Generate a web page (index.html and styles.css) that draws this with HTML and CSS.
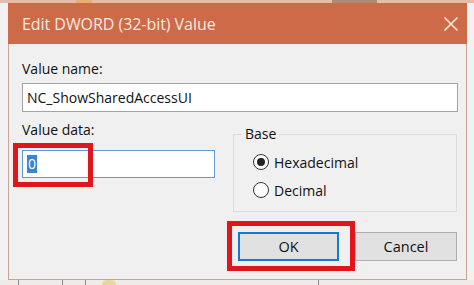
FILE: index.html
```html
<!DOCTYPE html>
<html>
<head>
<meta charset="utf-8">
<link rel="stylesheet" href="styles.css">
</head>
<body>
<div class="screen">
  <div class="topstrip">
    <span class="top-icon"></span>
    <span class="top-text">Name</span>
  </div>
  <div class="middle">
    <div class="dialog">
      <div class="titlebar">
        <span class="title">Edit DWORD (32-bit) Value</span>
        <svg class="close" width="16" height="16" viewBox="0 0 16 16"><path d="M1.5 1.5 L14.5 14.5 M14.5 1.5 L1.5 14.5" stroke="#fbe8df" stroke-width="1.6" fill="none"/></svg>
      </div>
      <div class="body">
        <div class="label first">Value name:</div>
        <div class="textbox name">NC_ShowSharedAccessUI</div>
        <div class="row">
          <div class="datacol">
            <div class="label">Value data:</div>
            <div class="datawrap">
              <div class="textbox data"><span class="sel">0</span></div>
              <div class="redmark data-mark"></div>
            </div>
          </div>
          <fieldset class="group">
            <legend>Base</legend>
            <div class="radio"><span class="circle checked"></span><span>Hexadecimal</span></div>
            <div class="radio"><span class="circle"></span><span>Decimal</span></div>
          </fieldset>
        </div>
        <div class="buttons">
          <div class="okwrap">
            <div class="btn ok">OK</div>
            <div class="redmark ok-mark"></div>
          </div>
          <div class="btn cancel">Cancel</div>
        </div>
      </div>
    </div>
  </div>
  <div class="bottomstrip">
    <span class="tick t1"></span>
    <span class="tick t2"></span>
    <span class="tick t3"></span>
    <span class="blob"></span>
    <span class="tick t4"></span>
  </div>
</div>
</body>
</html>
```
FILE: styles.css
```css
* { box-sizing: border-box; }
html, body { margin: 0; padding: 0; }
body {
  font-family: "Open Sans", "Noto Sans", sans-serif;
  background: #f3f2f2;
}
.screen {
  width: 474px;
  height: 285px;
  overflow: hidden;
  display: flex;
  flex-direction: column;
  background: #f3f2f2;
}
.topstrip {
  height: 3px;
  background: #e7bcaa;
  display: flex;
  align-items: stretch;
  flex: none;
}
.top-icon {
  width: 16px;
  margin-left: 76px;
  background: #e8b070;
}
.top-text {
  margin-left: 240px;
  width: 45px;
  background: #b08778;
  font-size: 1px;
  color: transparent;
  overflow: hidden;
}
.middle {
  flex: none;
  height: 277px;
  display: flex;
}
.dialog {
  margin-left: 8px;
  width: 459px;
  height: 277px;
  background: #f0f0f0;
  border: 1px solid #c9a595;
  border-top: none;
  display: flex;
  flex-direction: column;
}
.titlebar {
  height: 41px;
  flex: none;
  margin: 0 -1px;
  background: #cd6a47;
  color: #fbe9e0;
  display: flex;
  align-items: center;
  justify-content: space-between;
  padding: 0 8px 0 14px;
}
.title {
  font-size: 16px;
  letter-spacing: -0.05px;
  margin-top: 1px;
}
.close { margin-top: 1px; }
.body {
  padding: 0 9px 0 13px;
  color: #111;
  font-size: 14px;
}
.label {
  height: 16px;
  line-height: 16px;
  font-size: 14px;
}
.label.first { margin-top: 17px; }
.textbox {
  background: #fff;
  border: 1px solid #a4a4a4;
  height: 29px;
  line-height: 27px;
  padding-left: 4px;
  font-size: 14px;
}
.textbox.name {
  margin-top: 6px;
  width: 436px;
}
.row {
  display: flex;
  margin-top: 10px;
}
.datacol {
  width: 193px;
  flex: none;
}
.datawrap {
  position: relative;
  margin-top: 12px;
}
.textbox.data {
  width: 193px;
  height: 28px;
  border-color: #5e9ad6;
  line-height: 26px;
}
.sel {
  display: inline-block;
  background: #3b83d3;
  color: #fff;
  line-height: 18px;
  padding: 0 1px;
  vertical-align: middle;
  margin-top: -3px;
}
.redmark {
  position: absolute;
  border: 5px solid #e0161f;
}
.data-mark {
  left: -9px;
  top: -7px;
  width: 80px;
  height: 44px;
}
.group {
  margin: 5px 0 0 18px;
  padding: 0;
  width: 225px;
  height: 85px;
  border: 1px solid #dcdcdc;
  min-width: 0;
}
.group legend {
  margin-left: 8px;
  padding: 0 3px;
  font-size: 14px;
  line-height: 14px;
}
.radio {
  display: flex;
  align-items: center;
  height: 28px;
  margin-left: 19px;
  font-size: 14px;
}
.radio:first-of-type { margin-top: 7px; }
.circle {
  width: 16px;
  height: 16px;
  border: 1px solid #333;
  border-radius: 50%;
  background: #fff;
  margin-right: 5px;
  display: flex;
  align-items: center;
  justify-content: center;
  flex: none;
}
.circle.checked::after {
  content: "";
  width: 8px;
  height: 8px;
  border-radius: 50%;
  background: #222;
}
.buttons {
  display: flex;
  justify-content: flex-end;
  margin-top: 20px;
  gap: 16px;
}
.btn {
  height: 29px;
  background: #e1e1e1;
  border: 1px solid #adadad;
  display: flex;
  align-items: center;
  justify-content: center;
  font-size: 14.5px;
}
.okwrap { position: relative; }
.btn.ok {
  width: 101px;
  border: 2px solid #1679d0;
}
.ok-mark {
  left: -11px;
  top: -11px;
  width: 128px;
  height: 50px;
}
.btn.cancel {
  width: 102px;
}
.bottomstrip {
  flex: none;
  height: 5px;
  display: flex;
  background: #efebe9;
}
.tick {
  width: 1px;
  background: #8a8a8a;
}
.t1 { margin-left: 18px; }
.t2 { margin-left: 43px; }
.t3 { margin-left: 22px; }
.blob {
  width: 14px;
  margin-left: 16px;
  background: #ead7a0;
  border-radius: 6px 6px 0 0;
}
.t4 { margin-left: 202px; }
```
